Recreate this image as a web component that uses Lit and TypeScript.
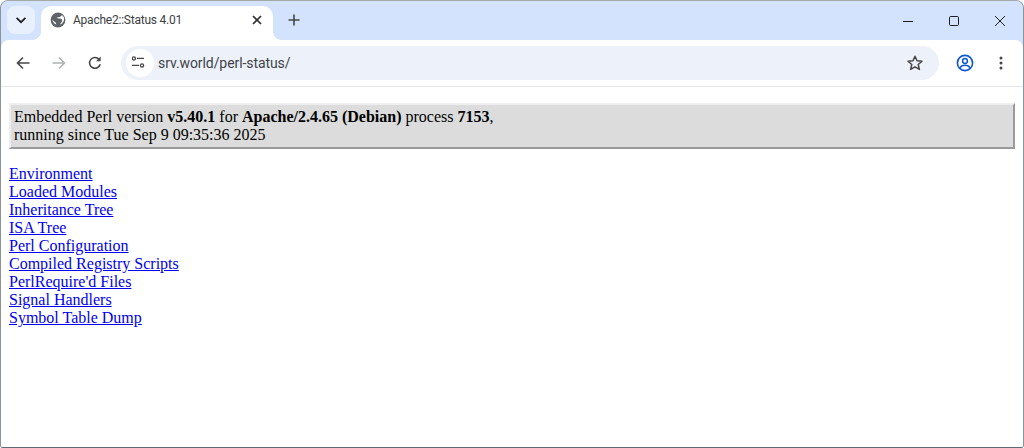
import { LitElement, html, css, svg } from "lit";
import { customElement } from "lit/decorators.js";

const links = [
  "Environment",
  "Loaded Modules",
  "Inheritance Tree",
  "ISA Tree",
  "Perl Configuration",
  "Compiled Registry Scripts",
  "PerlRequire'd Files",
  "Signal Handlers",
  "Symbol Table Dump",
];

@customElement("app-root")
export class AppRoot extends LitElement {
  static styles = css`
    :host { display: block; width: 1024px; height: 448px; overflow: hidden; background: #fff; }
    .win {
      box-sizing: border-box; width: 1024px; height: 448px; display: flex; flex-direction: column;
      border: 1px solid #8b9298; border-bottom-color: #5f6b73; border-radius: 8px 8px 3px 3px; border-top-color: #a3a8ad;
      overflow: hidden; background: #d3e3fd;
    }
    .title {
      height: 39px; flex: none; background: #d3e3fd; display: flex; align-items: flex-start;
      position: relative;
    }
    .drop {
      width: 28px; height: 28px; margin: 5px 0 0 6px; border-radius: 8px; background: #e8f0fe;
      display: flex; align-items: center; justify-content: center; flex: none;
    }
    .tab {
      position: relative; width: 232px; height: 34px; margin: 5px 0 0 6px; flex: none; background: #fff;
      border-radius: 10px 10px 0 0; display: flex; align-items: center; padding: 0 8px 6px 9px; box-sizing: border-box;
    }
    .tab::before, .tab::after {
      content: ""; position: absolute; bottom: 0; width: 8px; height: 8px;
    }
    .tab::before { left: -8px; background: radial-gradient(circle at 0 0, transparent 7.5px, #fff 8px); }
    .tab::after { right: -8px; background: radial-gradient(circle at 100% 0, transparent 7.5px, #fff 8px); }
    .tab-title { margin-left: 7px; flex: 1; font: 12px Roboto, "Open Sans", sans-serif; color: #3c4043; white-space: nowrap; letter-spacing: -0.23px; }
    .icon { display: block; flex: none; }
    .plus { margin: 11px 0 0 13px; }
    .spacer { flex: 1; }
    .wc { display: flex; margin-top: 0; flex: none; }
    .wc div { width: 46px; height: 39px; display: flex; align-items: center; justify-content: center; }
    .toolbar {
      height: 46px; flex: none; background: #fff; border-bottom: 1px solid #e3e5e8; display: flex; align-items: center;
      box-sizing: content-box; padding: 0 5px 0 4px; border-radius: 8px 8px 0 0; margin-top: 0;
    }
    .tb { width: 36px; height: 36px; display: flex; align-items: center; justify-content: center; flex: none; }
    .omni {
      flex: none; width: 818px; height: 34px; margin-left: 8px; border-radius: 17px; background: #edf2fa;
      display: flex; align-items: center; box-sizing: border-box; padding: 0 15px 0 5px;
    }
    .info { width: 28px; height: 28px; border-radius: 50%; background: #fff; display: flex; align-items: center; justify-content: center; flex: none; }
    .url { margin-left: 4px; flex: 1; font: 14px Roboto, "Open Sans", sans-serif; color: #3f4347; letter-spacing: -0.08px; }
    .tbr { margin-left: 8px; display: flex; }
    .page { flex: 1; padding: 16px 8px 0 8px; font: 16px/18px "Liberation Serif", "Times New Roman", serif; color: #000; background: #fff; }
    .head {
      box-sizing: border-box; height: 46px; padding: 3px 3px; background: #dcdcdc;
      border: 2px solid; border-color: #eeeeee #9a9a9a #9a9a9a #eeeeee;
      margin-bottom: 16px;
    }
    .links a { display: block; color: #0000ee; text-decoration: underline; width: max-content; }
  `;

  private ic(w: number, body: unknown, extra = "") {
    return html`<svg class="icon ${extra}" width=${w} height=${w} viewBox="0 0 ${w} ${w}" fill="none">${body}</svg>`;
  }

  render() {
    return html`<div class="win">
      <div class="title">
        <div class="drop">${this.ic(12, svg`<path d="M1.6 3.8 6 8.2l4.4-4.4" stroke="#1f1f1f" stroke-width="1.7"/>`)}</div>
        <div class="tab">
          ${this.ic(16, svg`<circle cx="8" cy="8" r="7.4" fill="#5f6368"/><path d="M12 3c-.6 1.2-1.4 1.7-2.6 2-1 .2-2 .3-2.4 1 .6.7 2 .3 3.300.6 1.600.4 2.200 1.600 1.700 2.800-.3.8-.9 1.200-1.400 1.800l-.5 1.300 2-1.100 1.700-2.300.4-3.300z" fill="#fff"/><path d="M2 8c1 1 2.200 1.200 3.100 2 .7.600.9 1.500 1.200 2.500-1.500-.5-3.400-2.300-4.300-4.500z" fill="#fff"/>`)}
          <span class="tab-title">Apache2::Status 4.01</span>
          ${this.ic(16, svg`<path d="m4 4 8 8M12 4l-8 8" stroke="#303134" stroke-width="1.7"/>`)}
        </div>
        ${this.ic(16, svg`<path d="M8 2.500v11M2.500 8h11" stroke="#444746" stroke-width="1.6"/>`, "plus")}
        <div class="spacer"></div>
        <div class="wc">
          <div>${this.ic(12, svg`<path d="M1 6.500h10" stroke="#1f1f1f" stroke-width="1"/>`)}</div>
          <div>${this.ic(12, svg`<rect x="1.500" y="1.500" width="9" height="9" rx="1.200" stroke="#1f1f1f" stroke-width="1"/>`)}</div>
          <div>${this.ic(12, svg`<path d="m1 1 10 10M11 1 1 11" stroke="#1f1f1f" stroke-width="1"/>`)}</div>
        </div>
      </div>
      <div class="toolbar">
        <div class="tb">${this.ic(16, svg`<path d="M14.500 8H2.500M8 2.500 2.500 8 8 13.500" stroke="#474747" stroke-width="1.6"/>`)}</div>
        <div class="tb">${this.ic(16, svg`<path d="M1.500 8h12M8 2.500 13.500 8 8 13.500" stroke="#b0b2b5" stroke-width="1.6"/>`)}</div>
        <div class="tb">${this.ic(16, svg`<path d="M13.200 9.200A5.400 5.400 0 1 1 12 4.300" stroke="#474747" stroke-width="1.6"/><path d="M13.600 1.600v4.600H9z" fill="#474747"/>`)}</div>
        <div class="omni">
          <div class="info">${this.ic(16, svg`<circle cx="1.900" cy="3.400" r="1.600" stroke="#474747" stroke-width="1.300"/><path d="M5 3.400h7M0 10.400h7" stroke="#474747" stroke-width="1.300"/><circle cx="10" cy="10.400" r="1.600" stroke="#474747" stroke-width="1.300"/>`)}</div>
          <span class="url">srv.world/perl-status/</span>
          ${this.ic(18, svg`<path d="m9 2.200 2 4.600 5 .4-3.800 3.300 1.200 4.900L9 12.800l-4.400 2.600 1.200-4.900L2 7.200l5-.4z" stroke="#474747" stroke-width="1.500" stroke-linejoin="round"/>`)}
        </div>
        <div class="tbr">
          <div class="tb">${this.ic(20, svg`<circle cx="10" cy="10" r="7.600" stroke="#0b57d0" stroke-width="1.600"/><circle cx="10" cy="8" r="2.400" stroke="#0b57d0" stroke-width="1.500"/><path d="M5 15c1-2.200 3-2.800 5-2.800s4 .6 5 2.800" stroke="#0b57d0" stroke-width="1.500"/>`)}</div>
          <div class="tb">${this.ic(16, svg`<circle cx="8" cy="3" r="1.500" fill="#474747"/><circle cx="8" cy="8" r="1.500" fill="#474747"/><circle cx="8" cy="13" r="1.500" fill="#474747"/>`)}</div>
        </div>
      </div>
      <div class="page">
        <div class="head">Embedded Perl version <b>v5.40.1</b> for <b>Apache/2.4.65 (Debian)</b> process <b>7153</b>,<br>running since Tue Sep 9 09:35:36 2025</div>
        <div class="links">${links.map((l) => html`<a href="#">${l}</a>`)}</div>
      </div>
    </div>`;
  }
}
